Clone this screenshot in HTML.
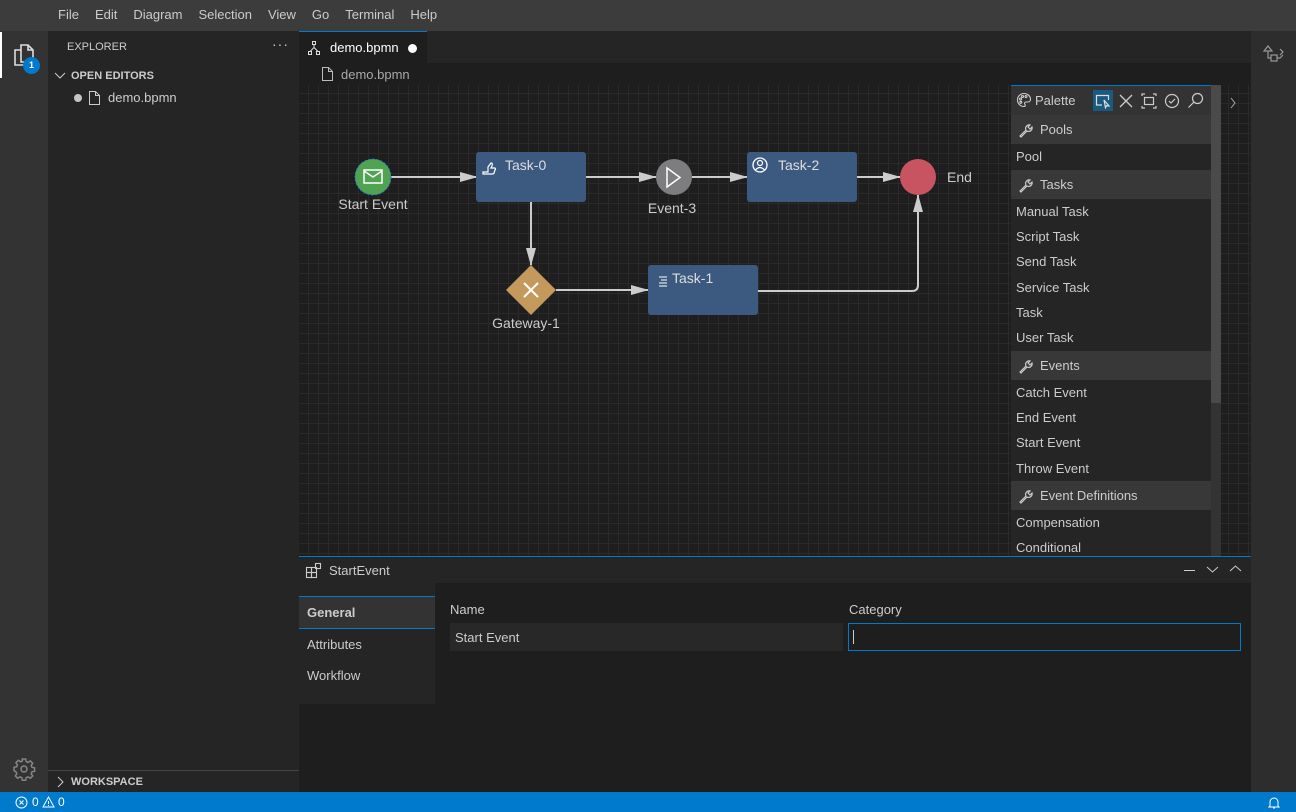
<!DOCTYPE html>
<html><head><meta charset="utf-8"><style>
*{margin:0;padding:0;box-sizing:border-box}
body{width:1296px;height:812px;overflow:hidden;background:#1e1e1e;font-family:"Liberation Sans",sans-serif;font-size:13px;color:#ccc;position:relative}
.a{position:absolute}
.menu span{margin-right:16px}
.pi{position:absolute;left:1011px;width:200px;height:26px;background:#252526;color:#ccc;padding-left:5px;line-height:25px;font-size:13px}
.pg{position:absolute;left:1011px;width:200px;height:29px;background:#383838;color:#ccc;padding-left:29px;line-height:29px;font-size:13px}
.pg svg{position:absolute;left:7px;top:7px}
</style></head><body>
<div class="a" style="left:0;top:0;width:1296px;height:31px;background:#3c3c3c"></div>
<div class="a menu" style="left:58px;top:7px;color:#ccc;font-size:13px"><span>File</span><span>Edit</span><span>Diagram</span><span>Selection</span><span>View</span><span>Go</span><span>Terminal</span><span>Help</span></div>
<div class="a" style="left:0;top:31px;width:48px;height:761px;background:#333"></div>
<div class="a" style="left:0;top:32px;width:2px;height:46px;background:#fff"></div>
<svg class="a" style="left:12px;top:42px" width="26" height="26" viewBox="0 0 26 26" fill="none" stroke="#ddd" stroke-width="1.6"><path d="M9 3h7l5 5v12H9z"/><path d="M16 3v5h5"/><path d="M9 8H3v15h12v-3"/></svg>
<div class="a" style="left:23px;top:57px;width:17px;height:17px;border-radius:50%;background:#007acc;color:#fff;font-size:9px;font-weight:bold;text-align:center;line-height:17px">1</div>
<svg class="a" style="left:12px;top:757px" width="24" height="24" viewBox="0 0 24 24" fill="none" stroke="#858585" stroke-width="1.5"><circle cx="12" cy="12" r="3"/><path d="M10.3 2h3.4l.5 2.6 1.9.8 2.2-1.5 2.4 2.4-1.5 2.2.8 1.9 2.6.5v3.4l-2.6.5-.8 1.9 1.5 2.2-2.4 2.4-2.2-1.5-1.9.8-.5 2.6h-3.4l-.5-2.6-1.9-.8-2.2 1.5-2.4-2.4 1.5-2.2-.8-1.9L2 13.7v-3.4l2.6-.5.8-1.9-1.5-2.2 2.4-2.4 2.2 1.5 1.9-.8z"/></svg>
<div class="a" style="left:48px;top:31px;width:251px;height:761px;background:#252526"></div>
<div class="a" style="left:67px;top:41px;font-size:11px;color:#ccc">EXPLORER</div>
<div class="a" style="left:272px;top:36px;font-size:14px;color:#ccc;letter-spacing:1px">···</div>
<svg class="a" style="left:54px;top:71px" width="12" height="10"><path d="M1 2l5 5 5-5" stroke="#ccc" fill="none"/></svg>
<div class="a" style="left:71px;top:70px;font-size:11px;font-weight:bold;color:#ccc">OPEN EDITORS</div>
<div class="a" style="left:74px;top:94px;width:8px;height:8px;border-radius:50%;background:#c5c5c5"></div>
<svg class="a" style="left:88px;top:90px" width="13" height="16" fill="none" stroke="#ccc"><path d="M1.5 1.5h6l4 4v9h-10z M7.5 1.5v4h4"/></svg>
<div class="a" style="left:108px;top:90px;font-size:13px;color:#ccc">demo.bpmn</div>
<div class="a" style="left:48px;top:770px;width:251px;height:1px;background:#444"></div>
<svg class="a" style="left:55px;top:776px" width="10" height="12"><path d="M3 1l5 5-5 5" stroke="#ccc" fill="none"/></svg>
<div class="a" style="left:71px;top:776px;font-size:11px;font-weight:bold;color:#ccc">WORKSPACE</div>
<div class="a" style="left:299px;top:31px;width:952px;height:32px;background:#252526"></div>
<div class="a" style="left:299px;top:31px;width:128px;height:32px;background:#1e1e1e;border-top:1px solid #007acc"></div>
<svg class="a" style="left:307px;top:40px" width="15" height="16" fill="none" stroke="#ddd"><rect x="5.5" y="1.5" width="3" height="3"/><rect x="1.5" y="11.5" width="3" height="3"/><rect x="9.5" y="11.5" width="3" height="3"/><path d="M7 4.5v3M7 7.5l-4 4M7 7.5l4 4"/></svg>
<div class="a" style="left:330px;top:40px;color:#fff;font-size:13px">demo.bpmn</div>
<div class="a" style="left:408px;top:44px;width:9px;height:9px;border-radius:50%;background:#fff"></div>
<div class="a" style="left:299px;top:63px;width:952px;height:22px;background:#1e1e1e"></div>
<svg class="a" style="left:321px;top:66px" width="13" height="16" fill="none" stroke="#bbb"><path d="M1.5 1.5h6l4 4v9h-10z M7.5 1.5v4h4"/></svg>
<div class="a" style="left:341px;top:67px;color:#a9a9a9;font-size:13px">demo.bpmn</div>
<div class="a" style="left:299px;top:85px;width:952px;height:471px;background-color:#1e1e1e;background-image:linear-gradient(#2a2a2a 1px,transparent 1px),linear-gradient(90deg,#2a2a2a 1px,transparent 1px);background-size:10px 10px;background-position:-1px -2px"></div>
<svg class="a" style="left:299px;top:85px" width="712" height="260" viewBox="299 85 712 260">
<defs><marker id="ar" markerWidth="18" markerHeight="10" refX="17" refY="5" orient="auto" markerUnits="userSpaceOnUse"><path d="M0 0L18 5L0 10z" fill="#ccc"/></marker></defs>
<g stroke="#ccc" stroke-width="2" fill="none">
<path d="M391 177H477" marker-end="url(#ar)"/>
<path d="M586 177H656" marker-end="url(#ar)"/>
<path d="M692 177H747" marker-end="url(#ar)"/>
<path d="M857 177H900" marker-end="url(#ar)"/>
<path d="M531 202V265" marker-end="url(#ar)"/>
<path d="M556 290H648" marker-end="url(#ar)"/>
<path d="M758 291H912q6 0 6-6V195" marker-end="url(#ar)"/>
</g>
<circle cx="373" cy="177" r="18" fill="#4fa352" stroke="#1f7ac9" stroke-dasharray="2 2"/>
<rect x="364" y="170" width="18" height="13" fill="none" stroke="#fff" stroke-width="1.5"/><path d="M364 171l9 6 9-6" stroke="#fff" stroke-width="1.5" fill="none"/>
<text x="373" y="209" fill="#ccc" font-size="14" text-anchor="middle" font-family="Liberation Sans">Start Event</text>
<rect x="476" y="152" width="110" height="50" rx="3" fill="#3c5a80"/>
<path d="M483 172h5v-5l3-4q2 0 1 3l-1 2h4q1 1 0 2l-1 3q0 1-2 1h-9z" stroke="#fff" fill="none" stroke-width="1.2"/>
<text x="505" y="170" fill="#ddd" font-size="14" font-family="Liberation Sans">Task-0</text>
<circle cx="674" cy="177" r="18" fill="#7d7d80"/>
<path d="M667 168v19l13-9.5z" fill="none" stroke="#fff" stroke-width="1.5"/>
<text x="672" y="213" fill="#ccc" font-size="14" text-anchor="middle" font-family="Liberation Sans">Event-3</text>
<rect x="747" y="152" width="110" height="50" rx="3" fill="#3c5a80"/>
<circle cx="760" cy="165" r="7" fill="none" stroke="#fff" stroke-width="1.3"/><circle cx="760" cy="163" r="2.5" fill="none" stroke="#fff" stroke-width="1.2"/><path d="M755.5 170q4.5-5 9 0" stroke="#fff" fill="none" stroke-width="1.2"/>
<text x="778" y="170" fill="#ddd" font-size="14" font-family="Liberation Sans">Task-2</text>
<circle cx="918" cy="177" r="18" fill="#c75460"/>
<text x="947" y="182" fill="#ccc" font-size="14" font-family="Liberation Sans">End</text>
<path d="M531 265l25 25-25 25-25-25z" fill="#c49a5c"/>
<path d="M524 283l14 14M538 283l-14 14" stroke="#fff" stroke-width="2"/>
<text x="526" y="328" fill="#ccc" font-size="14" text-anchor="middle" font-family="Liberation Sans">Gateway-1</text>
<rect x="648" y="265" width="110" height="50" rx="3" fill="#3c5a80"/>
<path d="M659 277h8M661 280h6M659 283h8M659 286h8" stroke="#fff" stroke-width="1"/>
<text x="672" y="283" fill="#ddd" font-size="14" font-family="Liberation Sans">Task-1</text>
</svg>
<div class="a" style="left:1011px;top:85px;width:200px;height:30px;background:#333;border-top:1px solid #007acc"></div>
<svg class="a" style="left:1016px;top:92px" width="16" height="16" fill="none" stroke="#ccc" stroke-width="1.1"><path d="M8 1.5a6.5 6.5 0 1 0 0 13c1.5 0 1.5-1.5.8-2.3-.7-.9 0-2.2 1.2-2.2h2a2.5 2.5 0 0 0 2.5-2.5C14.5 4 11.6 1.5 8 1.5z"/><circle cx="4.5" cy="7" r="1"/><circle cx="6.5" cy="4.5" r="1"/><circle cx="10" cy="4.5" r="1"/><circle cx="4.8" cy="10.3" r="1"/></svg>
<div class="a" style="left:1035px;top:93px;color:#ccc;font-size:13px">Palette</div>
<div class="a" style="left:1093px;top:90px;width:20px;height:21px;background:#1b5a80"></div>
<svg class="a" style="left:1095px;top:93px" width="16" height="16" fill="none" stroke="#ddd" stroke-width="1.2"><path d="M7 12H1.5V2.5h12V7"/><path d="M9 7l5 6-2.5-.3-1 2z"/></svg>
<svg class="a" style="left:1119px;top:94px" width="14" height="14" stroke="#ccc" stroke-width="1.3"><path d="M1 1l12 12M13 1L1 13"/></svg>
<svg class="a" style="left:1141px;top:93px" width="16" height="16" fill="none" stroke="#ccc" stroke-width="1.2"><rect x="3.5" y="4.5" width="9" height="7"/><path d="M1 3V1h3M12 1h3v2M15 13v2h-3M4 15H1v-2"/></svg>
<svg class="a" style="left:1164px;top:93px" width="16" height="16" fill="none" stroke="#ccc" stroke-width="1.2"><circle cx="8" cy="8" r="6.5"/><path d="M5 8l2 2 4-4"/></svg>
<svg class="a" style="left:1187px;top:92px" width="17" height="17" fill="none" stroke="#ccc" stroke-width="1.2"><circle cx="10.5" cy="6.5" r="5"/><path d="M7 10l-5.5 5.5"/></svg>
<svg class="a" style="left:1229px;top:97px" width="8" height="12"><path d="M2 1l4 5-4 5" stroke="#aaa" fill="none"/></svg>
<div class="a" style="left:1211px;top:85px;width:10px;height:318px;background:#4a4a4a"></div>
<div class="a" style="left:1211px;top:403px;width:10px;height:153px;background:#333"></div>
<div class="a" style="left:1011px;top:115px;width:200px;height:441px;background:#252526"></div>
<div class="pg" style="top:115px"><svg width="16" height="16" fill="none" stroke="#ccc" stroke-width="1.2"><path d="M2 14l6-6a3.5 3.5 0 0 1 4-5l-2 2 1 1 1 1 2-2a3.5 3.5 0 0 1-5 4l-6 6z"/></svg>Pools</div>
<div class="pi" style="top:144px">Pool</div>
<div class="pg" style="top:170px"><svg width="16" height="16" fill="none" stroke="#ccc" stroke-width="1.2"><path d="M2 14l6-6a3.5 3.5 0 0 1 4-5l-2 2 1 1 1 1 2-2a3.5 3.5 0 0 1-5 4l-6 6z"/></svg>Tasks</div>
<div class="pi" style="top:199px">Manual Task</div>
<div class="pi" style="top:224px">Script Task</div>
<div class="pi" style="top:249px">Send Task</div>
<div class="pi" style="top:275px">Service Task</div>
<div class="pi" style="top:300px">Task</div>
<div class="pi" style="top:325px">User Task</div>
<div class="pg" style="top:351px"><svg width="16" height="16" fill="none" stroke="#ccc" stroke-width="1.2"><path d="M2 14l6-6a3.5 3.5 0 0 1 4-5l-2 2 1 1 1 1 2-2a3.5 3.5 0 0 1-5 4l-6 6z"/></svg>Events</div>
<div class="pi" style="top:380px">Catch Event</div>
<div class="pi" style="top:405px">End Event</div>
<div class="pi" style="top:430px">Start Event</div>
<div class="pi" style="top:456px">Throw Event</div>
<div class="pg" style="top:481px"><svg width="16" height="16" fill="none" stroke="#ccc" stroke-width="1.2"><path d="M2 14l6-6a3.5 3.5 0 0 1 4-5l-2 2 1 1 1 1 2-2a3.5 3.5 0 0 1-5 4l-6 6z"/></svg>Event Definitions</div>
<div class="pi" style="top:510px">Compensation</div>
<div class="pi" style="top:535px;height:21px">Conditional</div>
<div class="a" style="left:1251px;top:31px;width:45px;height:761px;background:#2d2d2d"></div>
<svg class="a" style="left:1262px;top:44px" width="24" height="22" fill="none" stroke="#999" stroke-width="1.2"><path d="M2 7l4-5 4 5-4 0z"/><rect x="9" y="11" width="6" height="6"/><path d="M6 7v7h3M15 14h3l3-3M18 5l3 3-3 3"/></svg>
<div class="a" style="left:299px;top:556px;width:952px;height:1px;background:#007acc"></div>
<div class="a" style="left:299px;top:557px;width:952px;height:235px;background:#1e1e1e"></div>
<div class="a" style="left:299px;top:557px;width:952px;height:26px;background:#252526"></div>
<svg class="a" style="left:305px;top:562px" width="17" height="17" fill="none" stroke="#ccc" stroke-width="1.1"><rect x="1.5" y="5.5" width="5" height="5"/><rect x="6.5" y="5.5" width="5" height="5"/><rect x="1.5" y="10.5" width="5" height="5"/><rect x="6.5" y="10.5" width="5" height="5"/><rect x="10.5" y="1.5" width="5" height="5"/></svg>
<div class="a" style="left:329px;top:563px;color:#ccc;font-size:13px">StartEvent</div>
<div class="a" style="left:1184px;top:570px;width:11px;height:1px;background:#ccc"></div>
<svg class="a" style="left:1206px;top:565px" width="13" height="10"><path d="M1 2l5.5 5 5.5-5" stroke="#ccc" fill="none"/></svg>
<svg class="a" style="left:1229px;top:564px" width="13" height="10"><path d="M1 7l5.5-5 5.5 5" stroke="#ccc" fill="none"/></svg>
<div class="a" style="left:299px;top:583px;width:136px;height:121px;background:#252526"></div>
<div class="a" style="left:299px;top:596px;width:136px;height:33px;background:#333;border-top:1px solid #007acc;border-bottom:1px solid #007acc"></div>
<div class="a" style="left:307px;top:605px;font-weight:bold;color:#ccc">General</div>
<div class="a" style="left:307px;top:637px;color:#ccc">Attributes</div>
<div class="a" style="left:307px;top:668px;color:#ccc">Workflow</div>
<div class="a" style="left:450px;top:602px;color:#ccc">Name</div>
<div class="a" style="left:849px;top:602px;color:#ccc">Category</div>
<div class="a" style="left:450px;top:623px;width:393px;height:28px;background:#282828;padding:7px 5px;color:#ccc">Start Event</div>
<div class="a" style="left:848px;top:623px;width:393px;height:28px;background:#1e1e1e;border:1px solid #007acc"></div>
<div class="a" style="left:853px;top:630px;width:1px;height:14px;background:#ccc"></div>
<div class="a" style="left:0;top:792px;width:1296px;height:20px;background:#007acc"></div>
<svg class="a" style="left:15px;top:796px" width="13" height="13" fill="none" stroke="#fff"><circle cx="6.5" cy="6.5" r="5.5"/><path d="M4.5 4.5l4 4M8.5 4.5l-4 4"/></svg>
<div class="a" style="left:32px;top:795px;color:#fff;font-size:12px">0</div>
<svg class="a" style="left:42px;top:796px" width="13" height="12" fill="none" stroke="#fff"><path d="M6.5 1L12 11H1z M6.5 5v3M6.5 9v1"/></svg>
<div class="a" style="left:58px;top:795px;color:#fff;font-size:12px">0</div>
<svg class="a" style="left:1268px;top:796px" width="12" height="13" fill="none" stroke="#fff"><path d="M2 10V6a4 4 0 0 1 8 0v4l1 1H1z M5 12h2"/></svg>
</body></html>
